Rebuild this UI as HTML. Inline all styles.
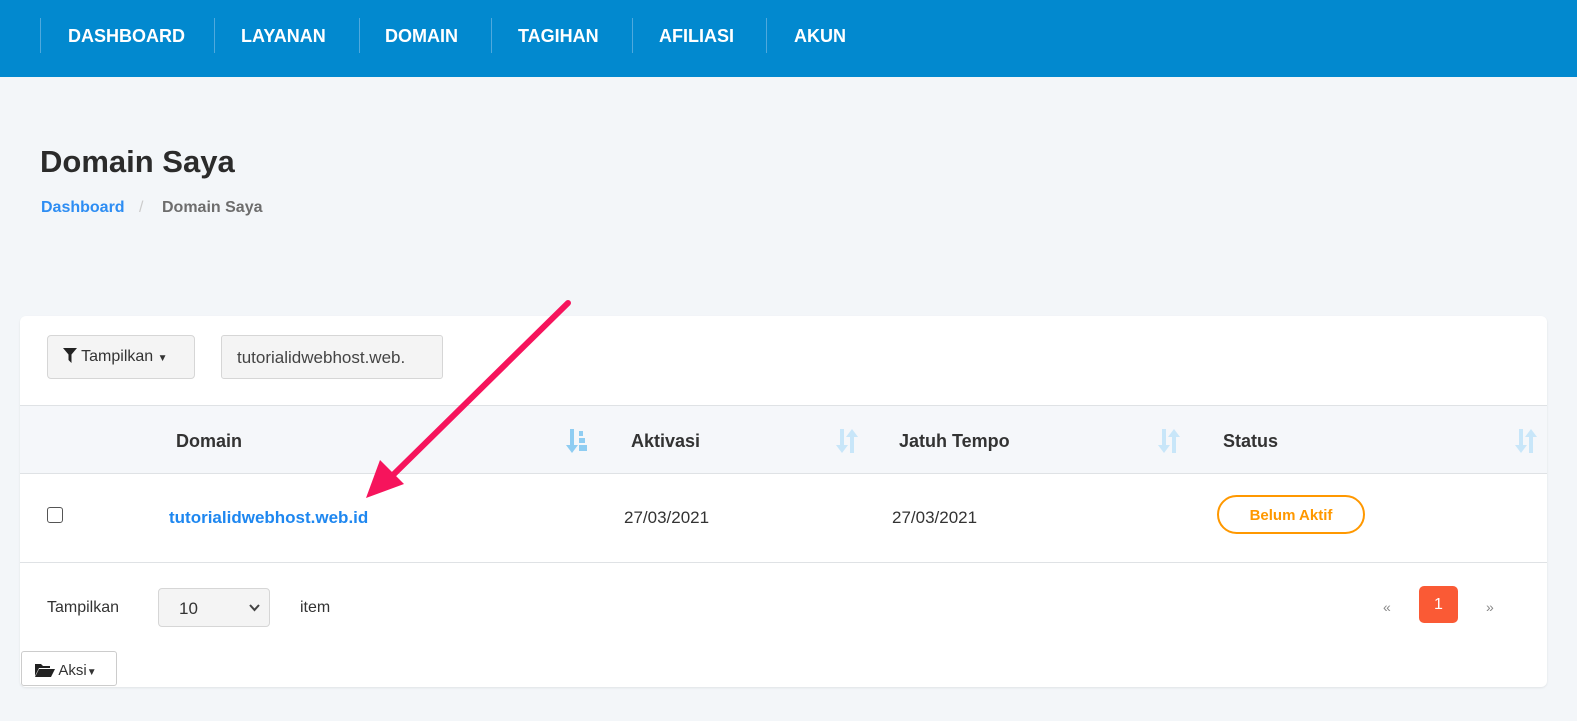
<!DOCTYPE html>
<html><head><meta charset="utf-8"><style>
*{margin:0;padding:0;box-sizing:border-box}
body{width:1577px;height:721px;background:#f3f6f9;font-family:"Liberation Sans",sans-serif;position:relative;overflow:hidden;color:#333}
.a{position:absolute;white-space:nowrap}
.nav{position:absolute;left:0;top:0;width:1577px;height:77px;background:#0289cf}
.sep{position:absolute;top:18px;height:35px;width:1px;background:#4fa9dd}
.nt{position:absolute;top:26px;color:#fff;font-weight:bold;font-size:18px}
.card{position:absolute;left:20px;top:316px;width:1527px;height:371px;background:#fff;border-radius:6px;box-shadow:0 1px 2px rgba(0,0,0,.08)}
.hl{position:absolute;left:20px;width:1527px;height:1px;background:#dfe2e5}
.th{font-weight:bold;font-size:18px;color:#333;top:431px}
.sort{position:absolute;top:429px}
</style></head><body>
<div class="nav">
<div class="sep" style="left:40px"></div><div class="sep" style="left:214px"></div><div class="sep" style="left:359px"></div><div class="sep" style="left:491px"></div><div class="sep" style="left:632px"></div><div class="sep" style="left:766px"></div>
<div class="nt" style="left:68px">DASHBOARD</div>
<div class="nt" style="left:241px">LAYANAN</div>
<div class="nt" style="left:385px">DOMAIN</div>
<div class="nt" style="left:518px">TAGIHAN</div>
<div class="nt" style="left:659px">AFILIASI</div>
<div class="nt" style="left:794px">AKUN</div>
</div>
<div class="a" style="left:40px;top:144px;font-size:31px;font-weight:bold;color:#2b2b2b">Domain Saya</div>
<div class="a" style="left:41px;top:199px;font-size:16px;font-weight:bold;color:#2d8df3">Dashboard</div>
<div class="a" style="left:139px;top:199px;font-size:16px;color:#ccc">/</div>
<div class="a" style="left:162px;top:199px;font-size:16px;font-weight:bold;color:#6d6d6d">Domain Saya</div>
<div class="card"></div>
<div class="a" style="left:47px;top:335px;width:148px;height:44px;background:#f4f4f4;border:1px solid #d6d6d6;border-radius:4px;font-size:16px;padding:12px 0 0 15px;color:#333">
<svg width="14" height="15" viewBox="0 0 14 15" style="vertical-align:-2px"><path d="M0 0H14L8.5 6.5V15L5.5 12V6.5Z" fill="#222"/></svg> Tampilkan <span style="font-size:10px">▼</span></div>
<div class="a" style="left:221px;top:335px;width:222px;height:44px;background:#f4f4f4;border:1px solid #d6d6d6;border-radius:3px;font-size:17px;padding:12px 0 0 15px;color:#444">tutorialidwebhost.web.</div>
<div class="a" style="left:20px;top:405px;width:1527px;height:68px;background:#f5f7fa"></div>
<div class="hl" style="top:405px"></div><div class="hl" style="top:473px"></div><div class="hl" style="top:562px"></div>
<div class="a th" style="left:176px">Domain</div>
<div class="a th" style="left:631px">Aktivasi</div>
<div class="a th" style="left:899px">Jatuh Tempo</div>
<div class="a th" style="left:1223px">Status</div>
<svg class="sort" style="left:566px" width="22" height="24" viewBox="0 0 22 24"><path d="M4 0H8V16H12L6 24L0 16H4Z M13 2H17V7H13Z M13 9H19V14H13Z M13 16H21V22H13Z" fill="#8fcdf2"/></svg>
<svg class="sort" style="left:836px" width="22" height="24" viewBox="0 0 22 24"><path d="M4 0H8V16H12L6 24L0 16H4Z M14 24H18V8H22L16 0L10 8H14Z" fill="#c8e6f9"/></svg>
<svg class="sort" style="left:1158px" width="22" height="24" viewBox="0 0 22 24"><path d="M4 0H8V16H12L6 24L0 16H4Z M14 24H18V8H22L16 0L10 8H14Z" fill="#c8e6f9"/></svg>
<svg class="sort" style="left:1515px" width="22" height="24" viewBox="0 0 22 24"><path d="M4 0H8V16H12L6 24L0 16H4Z M14 24H18V8H22L16 0L10 8H14Z" fill="#c8e6f9"/></svg>
<div class="a" style="left:47px;top:507px;width:16px;height:16px;border:1px solid #555;border-radius:3px;background:#fff"></div>
<div class="a" style="left:169px;top:508px;font-size:17px;font-weight:bold;color:#1e87f0">tutorialidwebhost.web.id</div>
<div class="a" style="left:624px;top:508px;font-size:17px;color:#333">27/03/2021</div>
<div class="a" style="left:892px;top:508px;font-size:17px;color:#333">27/03/2021</div>
<div class="a" style="left:1217px;top:495px;width:148px;height:39px;border:2px solid #ff9800;border-radius:20px;text-align:center;font-size:15px;font-weight:bold;color:#ff9800;padding-top:10px">Belum Aktif</div>
<div class="a" style="left:47px;top:599px;font-size:16px;color:#333">Tampilkan</div>
<div class="a" style="left:158px;top:588px;width:112px;height:39px;background:#f4f4f4;border:1px solid #d6d6d6;border-radius:4px;font-size:17px;padding:10px 0 0 20px;color:#333">10<svg style="position:absolute;right:9px;top:15px" width="11" height="8" viewBox="0 0 11 8"><path d="M1 1L5.5 6L10 1" stroke="#444" stroke-width="2" fill="none"/></svg></div>
<div class="a" style="left:300px;top:599px;font-size:16px;color:#333">item</div>
<div class="a" style="left:1383px;top:599px;font-size:14px;color:#888">«</div>
<div class="a" style="left:1419px;top:586px;width:39px;height:37px;background:#fa5a35;border-radius:5px;color:#fff;font-size:16px;text-align:center;padding-top:10px">1</div>
<div class="a" style="left:1486px;top:599px;font-size:14px;color:#888">»</div>
<div class="a" style="left:21px;top:651px;width:96px;height:35px;background:#fff;border:1px solid #ccc;border-radius:3px;font-size:15px;padding:10px 0 0 13px;color:#333">
<svg width="20" height="14" viewBox="0 0 20 14" style="vertical-align:-2px"><path d="M0 1H6L8 3H15V5H4L0 13Z M4 6H20L16 14H0Z" fill="#222"/></svg> Aksi<span style="font-size:10px">▼</span></div>
<svg class="a" style="left:0;top:0" width="1577" height="721"><line x1="568" y1="303" x2="392" y2="476" stroke="#f6145c" stroke-width="6" stroke-linecap="round"/><path d="M366 498L380 460L404 484Z" fill="#f6145c"/></svg>
</body></html>
